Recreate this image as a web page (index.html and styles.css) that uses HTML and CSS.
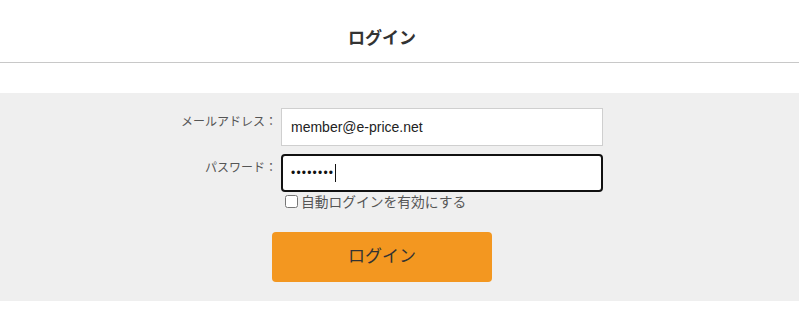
FILE: index.html
```html
<!DOCTYPE html>
<html lang="ja">
<head>
<meta charset="utf-8">
<title>ログイン</title>
<link rel="stylesheet" href="styles.css">
</head>
<body>
<div class="page">
  <header class="header">
    <h1 class="title">ログイン</h1>
  </header>
  <section class="panel">
    <form class="form">
      <label class="label" for="email">メールアドレス：</label>
      <input class="input" id="email" type="text" value="member@e-price.net">
      <label class="label label-pw" for="pw">パスワード：</label>
      <div class="field">
        <div class="input input-focus"><span class="dots">••••••••</span><span class="caret"></span></div>
        <label class="remember"><input type="checkbox" class="check">自動ログインを有効にする</label>
      </div>
    </form>
    <div class="actions">
      <button type="button" class="btn">ログイン</button>
    </div>
  </section>
</div>
</body>
</html>
```
FILE: styles.css
```css
* { box-sizing: border-box; }
html, body { margin: 0; padding: 0; background: #fff; }
body {
  font-family: "Liberation Sans", "Noto Sans CJK JP", sans-serif;
  color: #333;
}
.page { width: 764px; }
.header {
  height: 63px;
  border-bottom: 1px solid #c8c8c8;
  width: 799px;
  padding-top: 24px;
}
.title {
  margin: 0;
  width: 764px;
  text-align: center;
  font-size: 17px;
  line-height: 26px;
  font-weight: bold;
  color: #333;
  font-family: "Noto Sans CJK JP", sans-serif;
}
.panel {
  margin-top: 30px;
  width: 799px;
  height: 208px;
  background: #efefef;
  padding-top: 15px;
}
.form {
  display: grid;
  grid-template-columns: 277px 322px;
  column-gap: 4px;
  row-gap: 8px;
}
.label {
  text-align: right;
  font-size: 12px;
  line-height: 18px;
  padding-top: 4px;
  color: #555;
  font-family: "Noto Sans CJK JP", sans-serif;
}
.input {
  display: block;
  width: 322px;
  height: 38px;
  border: 1px solid #cfcfcf;
  background: #fff;
  padding: 0 9px;
  font-size: 14px;
  font-family: "Liberation Sans", "Noto Sans CJK JP", sans-serif;
  color: #222;
  outline: none;
  margin: 0;
  border-radius: 0;
}
.input-focus {
  border: 2px solid #111;
  border-radius: 4px;
  display: flex;
  align-items: center;
  padding: 0 8px;
}
.dots {
  font-size: 12px;
  letter-spacing: 1.2px;
  color: #111;
  font-family: "Liberation Sans", sans-serif;
}
.caret {
  display: inline-block;
  width: 1px;
  height: 18px;
  background: #111;
  margin-left: 1px;
}
.remember {
  display: flex;
  align-items: center;
  margin-top: 1px;
  padding-left: 3px;
  font-size: 13.75px;
  line-height: 16px;
  color: #555;
  font-family: "Noto Sans CJK JP", sans-serif;
}
.check {
  margin: 1px 3px 0 1px;
  width: 13px;
  height: 13px;
}
.actions {
  width: 764px;
  display: flex;
  justify-content: center;
  margin-top: 23px;
}
.btn {
  width: 220px;
  height: 50px;
  background: #f39720;
  border: none;
  border-radius: 4px;
  padding: 0 0 5px;
  font-size: 17px;
  color: #333;
  font-family: "Noto Sans CJK JP", sans-serif;
  cursor: pointer;
}
```
